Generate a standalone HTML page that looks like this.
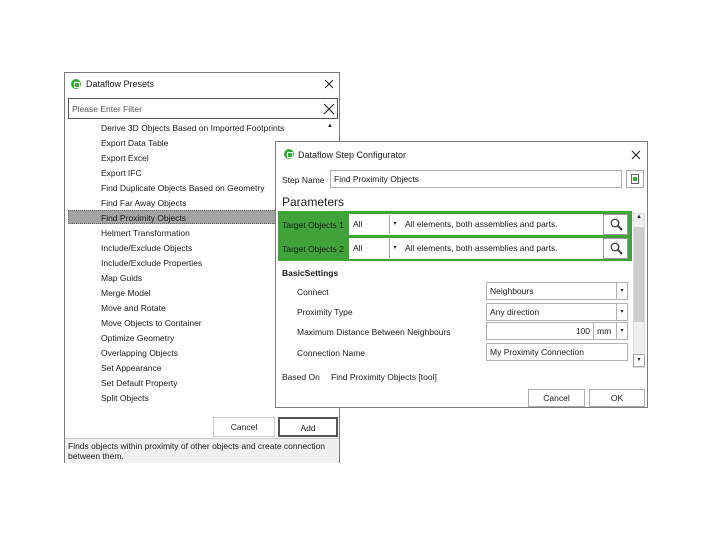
<!DOCTYPE html>
<html><head><style>
*{box-sizing:border-box;margin:0;padding:0}
body{width:720px;height:557px;background:#fff;font-family:"Liberation Sans",sans-serif;font-size:8.5px;color:#1a1a1a;position:relative;overflow:hidden}
.a{position:absolute}
.dlg{position:absolute;background:#fff;border:1px solid #7a7a7a}
.ico{position:absolute;width:10px;height:10px;border-radius:50%;background:#3aa83a}
.ico:after{content:"";position:absolute;left:3px;top:3px;width:4px;height:4px;border:1px solid #fff;border-radius:1px}
.btn{position:absolute;border:1px solid #adadad;background:#fff;text-align:center;line-height:18px}
.inp{position:absolute;border:1px solid #b0b0b0;background:#fff;padding-left:3px;white-space:nowrap;overflow:hidden}
.dd{position:absolute;right:0;top:0;bottom:0;width:11px;border-left:1px solid #b0b0b0;font-size:6px;text-align:center}
.srch{position:absolute;width:25px;height:21px;background:#fff;border:1px solid #999}
</style></head><body>
<!-- left dialog -->
<div class="dlg" style="left:64px;top:72px;width:276px;height:391px">
 <div class="ico" style="left:6px;top:6px"></div>
 <div class="a" style="left:21px;top:6px;font-size:9px">Dataflow Presets</div>
 <svg class="a" style="left:259px;top:6px" width="10" height="10"><path d="M1 1L9 9M9 1L1 9" stroke="#222" stroke-width="1.1"/></svg>
 <div class="a" style="left:3px;top:25px;width:270px;height:21px;border:1px solid #555;color:#555;padding:5px 3px;font-size:8.5px">Please Enter Filter</div>
 <svg class="a" style="left:258px;top:30px" width="12" height="12"><path d="M1 1L11 11M11 1L1 11" stroke="#222" stroke-width="1.1"/></svg>
 <div class="a" style="left:262px;top:50px;font-size:6px">▲</div>
 <div class="a" style="left:3px;top:137px;width:263px;height:14px;background:#a3a3a3;border:1px dotted #666"></div>
 <div class="a" style="left:36px;top:48px;line-height:15px">
Derive 3D Objects Based on Imported Footprints<br>Export Data Table<br>Export Excel<br>Export IFC<br>Find Duplicate Objects Based on Geometry<br>Find Far Away Objects<br>Find Proximity Objects<br>Helmert Transformation<br>Include/Exclude Objects<br>Include/Exclude Properties<br>Map Guids<br>Merge Model<br>Move and Rotate<br>Move Objects to Container<br>Optimize Geometry<br>Overlapping Objects<br>Set Appearance<br>Set Default Property<br>Split Objects</div>
 <div class="btn" style="left:148px;top:344px;width:62px;height:20px;border-color:#ccc">Cancel</div>
 <div class="btn" style="left:213px;top:344px;width:60px;height:20px;border:2px solid #555">Add</div>
 <div class="a" style="left:0;top:365px;width:274px;height:25px;background:#f0f0f0;border-top:1px solid #ccc;padding:2px 3px;line-height:10px">Finds objects within proximity of other objects and create connection between them.</div>
</div>
<!-- right dialog -->
<div class="dlg" style="left:275px;top:141px;width:373px;height:267px">
 <div class="ico" style="left:8px;top:7px"></div>
 <div class="a" style="left:22px;top:8px;font-size:9px">Dataflow Step Configurator</div>
 <svg class="a" style="left:355px;top:8px" width="10" height="10"><path d="M1 1L9 9M9 1L1 9" stroke="#222" stroke-width="1.1"/></svg>
 <div class="a" style="left:6px;top:33px">Step Name</div>
 <div class="inp" style="left:54px;top:28px;width:292px;height:18px;line-height:16px">Find Proximity Objects</div>
 <div class="a" style="left:350px;top:28px;width:18px;height:18px;border:1px solid #aaa"><div class="a" style="left:4px;top:3px;width:8px;height:10px;border:1px solid #666"></div><div class="a" style="left:6px;top:6px;width:4px;height:4px;background:#3aa83a"></div></div>
 <div class="a" style="left:6px;top:53px;font-size:12px">Parameters</div>
 <div class="a" style="left:2px;top:69px;width:354px;height:50px;background:#3fa33a"></div>
 <div class="a" style="left:6px;top:78px">Target Objects 1</div>
 <div class="a" style="left:6px;top:102px">Target Objects 2</div>
 <div class="inp" style="left:73px;top:72px;width:52px;height:21px;line-height:19px;border-color:#fff">All<div class="dd" style="border-color:#aaa">▾</div></div>
 <div class="inp" style="left:125px;top:72px;width:202px;height:21px;line-height:19px;border-color:#fff">All elements, both assemblies and parts.</div>
 <div class="srch" style="left:327px;top:72px"><svg class="a" style="left:6px;top:3px" width="13" height="13"><circle cx="5" cy="5" r="3.8" fill="none" stroke="#333" stroke-width="1.2"/><path d="M7.8 7.8L12 12" stroke="#333" stroke-width="1.8"/></svg></div>
 <div class="inp" style="left:73px;top:96px;width:52px;height:21px;line-height:19px;border-color:#fff">All<div class="dd" style="border-color:#aaa">▾</div></div>
 <div class="inp" style="left:125px;top:96px;width:202px;height:21px;line-height:19px;border-color:#fff">All elements, both assemblies and parts.</div>
 <div class="srch" style="left:327px;top:96px"><svg class="a" style="left:6px;top:3px" width="13" height="13"><circle cx="5" cy="5" r="3.8" fill="none" stroke="#333" stroke-width="1.2"/><path d="M7.8 7.8L12 12" stroke="#333" stroke-width="1.8"/></svg></div>
 <div class="a" style="left:357px;top:71px;width:12px;height:155px;background:#f0f0f0;border:1px solid #ddd"></div>
 <div class="a" style="left:358px;top:85px;width:10px;height:95px;background:#cdcdcd"></div>
 <div class="a" style="left:360px;top:72px;font-size:6px">▲</div>
 <div class="a" style="left:357px;top:212px;width:12px;height:13px;border:1px solid #aaa;font-size:6px;text-align:center;line-height:11px;background:#fff">▾</div>
 <div class="a" style="left:6px;top:126px;font-weight:bold">BasicSettings</div>
 <div class="a" style="left:21px;top:145px">Connect</div>
 <div class="a" style="left:21px;top:165px">Proximity Type</div>
 <div class="a" style="left:21px;top:185px">Maximum Distance Between Neighbours</div>
 <div class="a" style="left:21px;top:206px">Connection Name</div>
 <div class="inp" style="left:210px;top:140px;width:142px;height:18px;line-height:16px">Neighbours<div class="dd">▾</div></div>
 <div class="inp" style="left:210px;top:161px;width:142px;height:18px;line-height:16px">Any direction<div class="dd">▾</div></div>
 <div class="inp" style="left:210px;top:180px;width:108px;height:18px;line-height:16px;text-align:right;padding-right:3px">100</div>
 <div class="inp" style="left:317px;top:180px;width:35px;height:18px;line-height:16px">mm<div class="dd">▾</div></div>
 <div class="inp" style="left:210px;top:201px;width:142px;height:18px;line-height:16px">My Proximity Connection</div>
 <div class="a" style="left:6px;top:230px">Based On</div>
 <div class="a" style="left:55px;top:230px">Find Proximity Objects [tool]</div>
 <div class="btn" style="left:252px;top:247px;width:57px;height:18px;line-height:16px">Cancel</div>
 <div class="btn" style="left:313px;top:247px;width:56px;height:18px;line-height:16px">OK</div>
</div>
</body></html>
